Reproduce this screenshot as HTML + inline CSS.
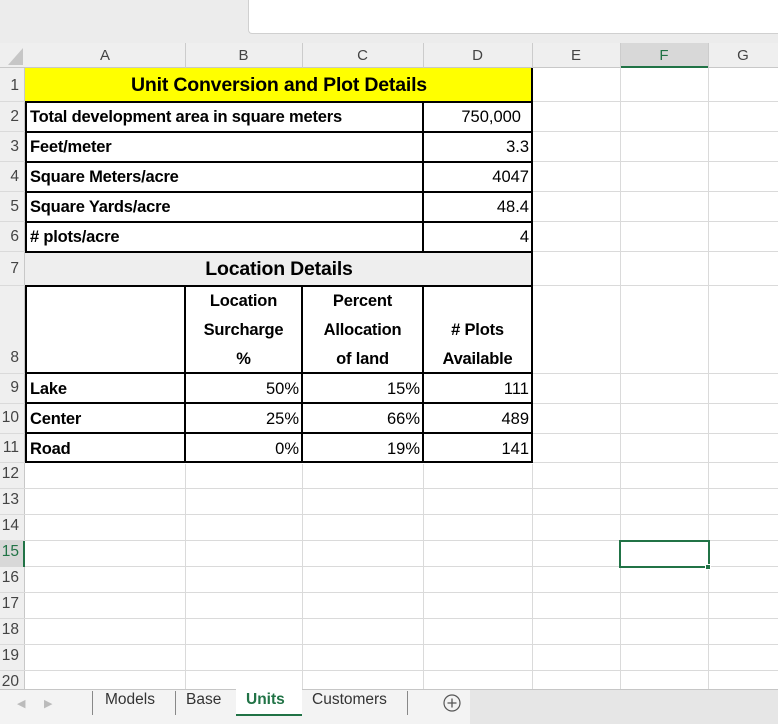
<!DOCTYPE html>
<html><head><meta charset="utf-8"><style>
*{margin:0;padding:0;box-sizing:border-box}
body{width:778px;height:724px;overflow:hidden;background:#fff;position:relative;font-family:"Liberation Sans",Arial,sans-serif;}
.a{position:absolute}
.vl{position:absolute;width:1px;background:#dadada}
.hl{position:absolute;height:1px;background:#dadada}
.rh{position:absolute;left:0;width:24px;text-align:right;padding-right:5px;font-size:15.5px;color:#444;font-family:"Liberation Sans",sans-serif}
.ch{position:absolute;top:43px;height:25px;line-height:26px;text-align:center;font-size:15px;color:#444}
.t{position:absolute;font-size:16.5px;font-weight:bold;color:#000;white-space:nowrap;letter-spacing:-0.2px}
.n{position:absolute;font-size:16.5px;color:#000;text-align:right;white-space:nowrap}
.bk{position:absolute;background:#000}
</style></head><body>
<div class="a" style="left:0;top:0;width:778px;height:43px;background:#ececec"></div>
<div class="a" style="left:248px;top:0;width:530px;height:34px;background:#fff;border-left:1px solid #d0d0d0;border-bottom:1px solid #d0d0d0;border-bottom-left-radius:4px"></div>
<div class="a" style="left:0;top:43px;width:778px;height:25px;background:#efefef;border-bottom:1px solid #c8c8c8"></div>
<div class="a" style="left:0;top:68px;width:25px;height:621px;background:#efefef;border-right:1px solid #c8c8c8"></div>
<svg class="a" style="left:6px;top:46px" width="18" height="20"><polygon points="17,2 17,19 2,19" fill="#c6c6c6"/></svg>
<div class="a" style="left:620px;top:43px;width:88px;height:25px;background:#d8d8d8;border-bottom:2px solid #217346"></div>
<div class="ch" style="left:25px;width:160px">A</div>
<div class="ch" style="left:185px;width:117px">B</div>
<div class="ch" style="left:302px;width:121px">C</div>
<div class="ch" style="left:423px;width:109px">D</div>
<div class="ch" style="left:532px;width:88px">E</div>
<div class="ch" style="left:620px;width:88px;color:#217346">F</div>
<div class="ch" style="left:708px;width:70px">G</div>
<div class="vl" style="left:185px;top:43px;height:25px;background:#ccc"></div>
<div class="vl" style="left:302px;top:43px;height:25px;background:#ccc"></div>
<div class="vl" style="left:423px;top:43px;height:25px;background:#ccc"></div>
<div class="vl" style="left:532px;top:43px;height:25px;background:#ccc"></div>
<div class="vl" style="left:620px;top:43px;height:25px;background:#ccc"></div>
<div class="vl" style="left:708px;top:43px;height:25px;background:#ccc"></div>
<!-- grid -->
<div class="vl" style="left:185px;top:68px;height:621px"></div>
<div class="vl" style="left:302px;top:68px;height:621px"></div>
<div class="vl" style="left:423px;top:68px;height:621px"></div>
<div class="vl" style="left:532px;top:68px;height:621px"></div>
<div class="vl" style="left:620px;top:68px;height:621px"></div>
<div class="vl" style="left:708px;top:68px;height:621px"></div>
<div class="hl" style="left:0;top:101px;width:778px"></div>
<div class="hl" style="left:0;top:131px;width:778px"></div>
<div class="hl" style="left:0;top:161px;width:778px"></div>
<div class="hl" style="left:0;top:191px;width:778px"></div>
<div class="hl" style="left:0;top:221px;width:778px"></div>
<div class="hl" style="left:0;top:251px;width:778px"></div>
<div class="hl" style="left:0;top:285px;width:778px"></div>
<div class="hl" style="left:0;top:373px;width:778px"></div>
<div class="hl" style="left:0;top:403px;width:778px"></div>
<div class="hl" style="left:0;top:433px;width:778px"></div>
<div class="hl" style="left:0;top:462px;width:778px"></div>
<div class="hl" style="left:0;top:488px;width:778px"></div>
<div class="hl" style="left:0;top:514px;width:778px"></div>
<div class="hl" style="left:0;top:540px;width:778px"></div>
<div class="hl" style="left:0;top:566px;width:778px"></div>
<div class="hl" style="left:0;top:592px;width:778px"></div>
<div class="hl" style="left:0;top:618px;width:778px"></div>
<div class="hl" style="left:0;top:644px;width:778px"></div>
<div class="hl" style="left:0;top:670px;width:778px"></div>
<!-- row headers -->
<div class="rh" style="top:77px">1</div>
<div class="rh" style="top:108px">2</div>
<div class="rh" style="top:138px">3</div>
<div class="rh" style="top:168px">4</div>
<div class="rh" style="top:198px">5</div>
<div class="rh" style="top:228px">6</div>
<div class="rh" style="top:260px">7</div>
<div class="rh" style="top:349px">8</div>
<div class="rh" style="top:379px">9</div>
<div class="rh" style="top:409px">10</div>
<div class="rh" style="top:439px">11</div>
<div class="rh" style="top:465px">12</div>
<div class="rh" style="top:491px">13</div>
<div class="rh" style="top:517px">14</div>
<div class="a" style="left:0;top:541px;width:25px;height:26px;background:#d8d8d8;border-right:2px solid #217346"></div>
<div class="rh" style="top:543px;color:#217346">15</div>
<div class="rh" style="top:569px">16</div>
<div class="rh" style="top:595px">17</div>
<div class="rh" style="top:621px">18</div>
<div class="rh" style="top:647px">19</div>
<div class="rh" style="top:673px">20</div>
<!-- row1 yellow -->
<div class="a" style="left:25px;top:68px;width:508px;height:34px;background:#ffff00"></div>
<div class="t" style="left:25px;top:74px;width:508px;text-align:center;font-size:19.5px">Unit Conversion and Plot Details</div>
<!-- rows 2-6 -->
<div class="a" style="left:25px;top:101px;width:508px;height:151px;background:#fff"></div>
<div class="t" style="left:30px;top:108px">Total development area in square meters</div>
<div class="t" style="left:30px;top:138px">Feet/meter</div>
<div class="t" style="left:30px;top:168px">Square Meters/acre</div>
<div class="t" style="left:30px;top:198px">Square Yards/acre</div>
<div class="t" style="left:30px;top:228px"># plots/acre</div>
<div class="n" style="left:423px;width:98px;top:108px">750,000</div>
<div class="n" style="left:423px;width:106px;top:138px">3.3</div>
<div class="n" style="left:423px;width:106px;top:168px">4047</div>
<div class="n" style="left:423px;width:106px;top:198px">48.4</div>
<div class="n" style="left:423px;width:106px;top:228px">4</div>
<!-- row7 -->
<div class="a" style="left:25px;top:252px;width:508px;height:34px;background:#eeeeee"></div>
<div class="t" style="left:25px;top:258px;width:508px;text-align:center;font-size:19.5px">Location Details</div>
<!-- row8 -->
<div class="a" style="left:25px;top:286px;width:508px;height:178px;background:#fff"></div>
<div class="t" style="left:185px;width:117px;text-align:center;top:287px;line-height:29px">Location<br>Surcharge<br>%</div>
<div class="t" style="left:302px;width:121px;text-align:center;top:287px;line-height:29px">Percent<br>Allocation<br>of land</div>
<div class="t" style="left:423px;width:109px;text-align:center;top:316px;line-height:29px"># Plots<br>Available</div>
<div class="t" style="left:30px;top:380px">Lake</div>
<div class="t" style="left:30px;top:410px">Center</div>
<div class="t" style="left:30px;top:440px">Road</div>
<div class="n" style="left:185px;width:114px;top:380px">50%</div>
<div class="n" style="left:185px;width:114px;top:410px">25%</div>
<div class="n" style="left:185px;width:114px;top:440px">0%</div>
<div class="n" style="left:302px;width:118px;top:380px">15%</div>
<div class="n" style="left:302px;width:118px;top:410px">66%</div>
<div class="n" style="left:302px;width:118px;top:440px">19%</div>
<div class="n" style="left:423px;width:106px;top:380px">111</div>
<div class="n" style="left:423px;width:106px;top:410px">489</div>
<div class="n" style="left:423px;width:106px;top:440px">141</div>
<!-- black borders -->
<div class="bk" style="left:25px;top:101px;width:508px;height:2px"></div>
<div class="bk" style="left:25px;top:131px;width:508px;height:2px"></div>
<div class="bk" style="left:25px;top:161px;width:508px;height:2px"></div>
<div class="bk" style="left:25px;top:191px;width:508px;height:2px"></div>
<div class="bk" style="left:25px;top:221px;width:508px;height:2px"></div>
<div class="bk" style="left:25px;top:251px;width:508px;height:2px"></div>
<div class="bk" style="left:25px;top:285px;width:508px;height:2px"></div>
<div class="bk" style="left:25px;top:372px;width:508px;height:2px"></div>
<div class="bk" style="left:25px;top:402px;width:508px;height:2px"></div>
<div class="bk" style="left:25px;top:432px;width:508px;height:2px"></div>
<div class="bk" style="left:25px;top:461px;width:508px;height:2px"></div>
<div class="bk" style="left:25px;top:101px;width:2px;height:151px"></div>
<div class="bk" style="left:25px;top:286px;width:2px;height:177px"></div>
<div class="bk" style="left:531px;top:68px;width:2px;height:395px"></div>
<div class="bk" style="left:422px;top:101px;width:2px;height:151px"></div>
<div class="bk" style="left:184px;top:286px;width:2px;height:177px"></div>
<div class="bk" style="left:301px;top:286px;width:2px;height:177px"></div>
<div class="bk" style="left:422px;top:286px;width:2px;height:177px"></div>
<!-- selection -->
<div class="a" style="left:619px;top:540px;width:91px;height:28px;border:2px solid #217346"></div>
<div class="a" style="left:705px;top:564px;width:6px;height:6px;background:#217346;border:1px solid #fff"></div>
<!-- tab bar -->
<div class="a" style="left:0;top:689px;width:778px;height:35px;background:#e6e6e6;border-top:1px solid #c6c6c6"></div>
<div class="a" style="left:0;top:690px;width:470px;height:34px;background:#f3f3f3"></div>
<div class="a" style="left:17px;top:697px;font-size:11px;color:#bbb">&#9664;</div>
<div class="a" style="left:44px;top:697px;font-size:11px;color:#bbb">&#9654;</div>
<div class="a" style="left:92px;top:691px;width:1px;height:24px;background:#888"></div>
<div class="a" style="left:105px;top:691px;font-size:15.5px;color:#333">Models</div>
<div class="a" style="left:175px;top:691px;width:1px;height:24px;background:#888"></div>
<div class="a" style="left:186px;top:691px;font-size:15.5px;color:#333">Base</div>
<div class="a" style="left:236px;top:689px;width:66px;height:27px;background:#fff;border-bottom:2px solid #217346"></div>
<div class="a" style="left:246px;top:691px;font-size:15.5px;font-weight:bold;color:#217346">Units</div>
<div class="a" style="left:312px;top:691px;font-size:15.5px;color:#333">Customers</div>
<div class="a" style="left:407px;top:691px;width:1px;height:24px;background:#888"></div>
<svg class="a" style="left:442px;top:693px" width="20" height="20"><circle cx="10" cy="10" r="8" fill="none" stroke="#555" stroke-width="1.2"/><path d="M10 5.5v9M5.5 10h9" stroke="#555" stroke-width="1.3"/></svg>
</body></html>
